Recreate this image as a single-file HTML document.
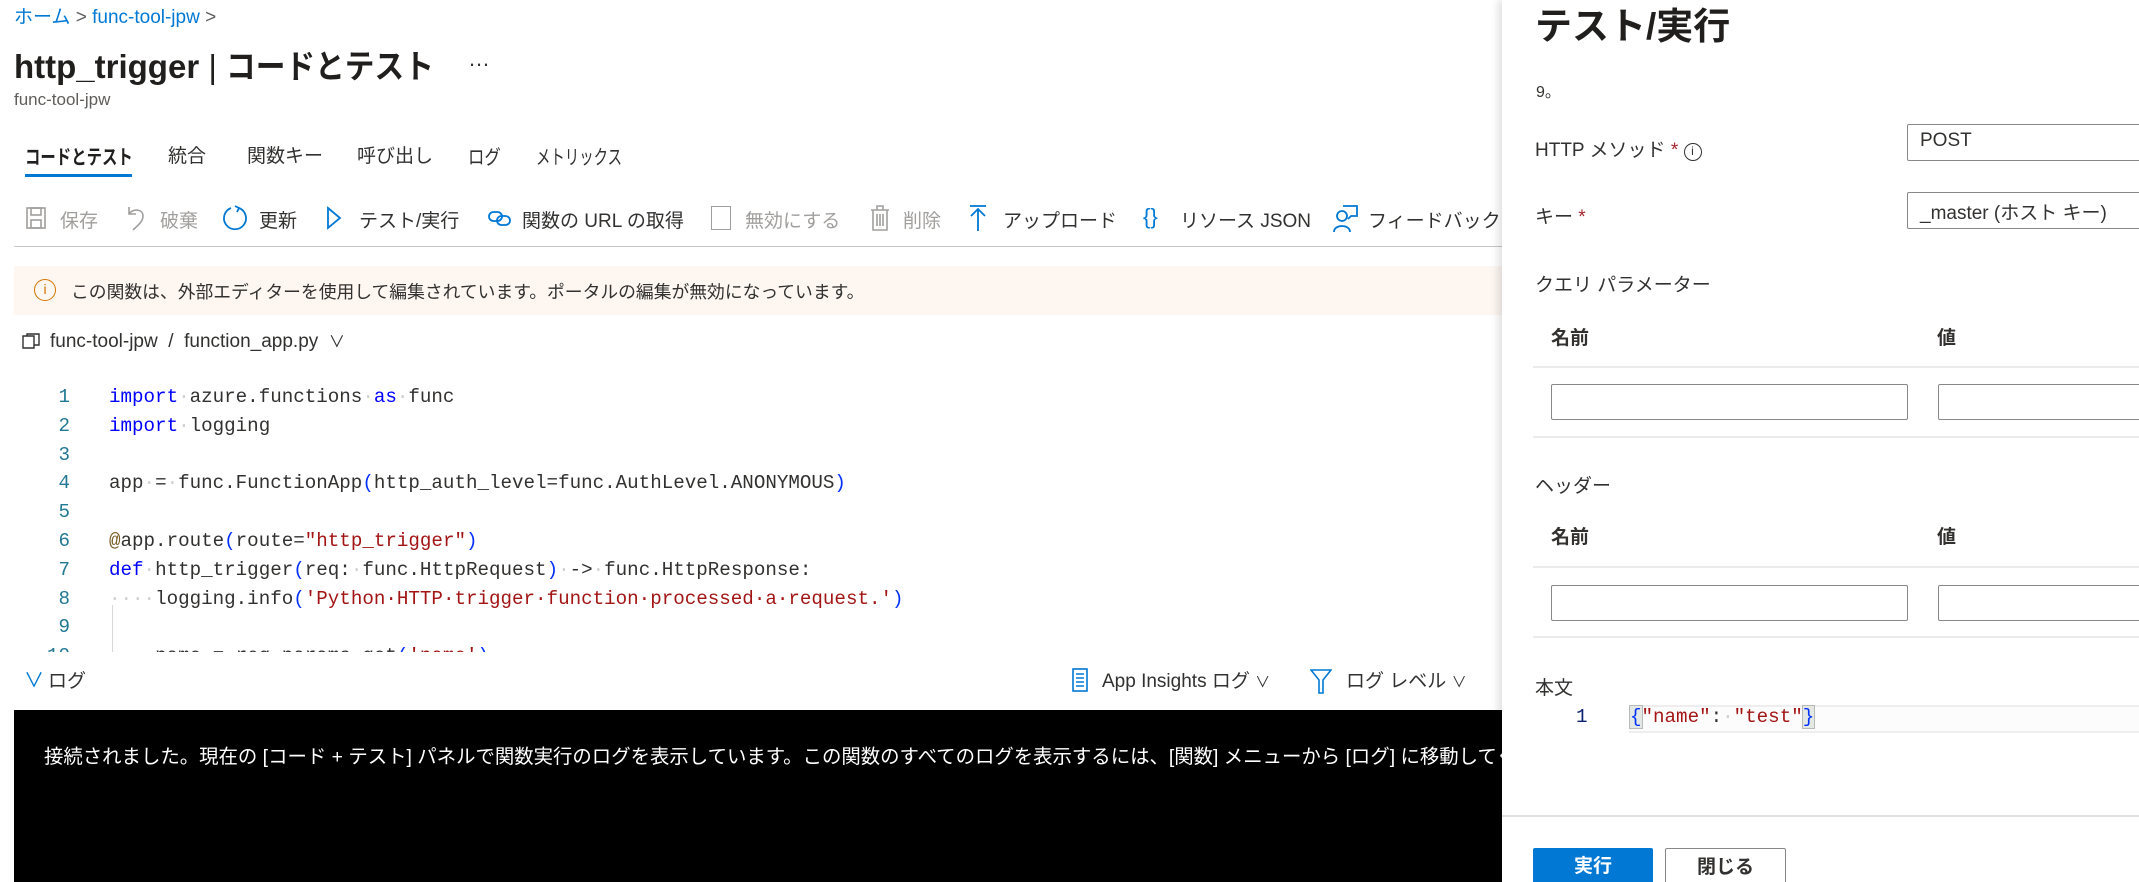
<!DOCTYPE html>
<html><head><meta charset="utf-8"><style>
*{margin:0;padding:0;box-sizing:border-box}
body{width:2139px;height:882px;overflow:hidden;background:#fff;position:relative;font-family:"Liberation Sans","Noto Sans CJK JP",sans-serif;color:#323130}
.a{position:absolute;white-space:nowrap}
.t{font-size:19px}
.sx{display:inline-block;transform-origin:left center}
.mono{font-family:"Liberation Mono","Noto Sans CJK JP",monospace;font-size:19.2px}
.kw{color:#0000ff}.st{color:#a31515}.ws{color:#d0d0d0}.pb{color:#0431fa}
.ln{color:#237893;width:40px;text-align:right}
.inp{position:absolute;border:1px solid #8a8886;border-radius:2px;background:#fff}
.hl{position:absolute;height:2px;background:#edebe9}
</style></head><body>
<div class="a t" style="left:14px;top:2px;color:#0078d4">ホーム <span style="color:#605e5c">&gt;</span> func-tool-jpw <span style="color:#605e5c">&gt;</span></div>
<div class="a" style="left:14px;top:40px;font-size:33px;font-weight:600;color:#201f1e">http_trigger <span style="font-weight:400">|</span> <span class="sx" style="transform:scaleX(0.9)">コードとテスト</span></div>
<div class="a" style="left:468px;top:46px;font-size:22px">…</div>
<div class="a" style="left:14px;top:90px;font-size:17px;color:#605e5c">func-tool-jpw</div>
<div class="a t" style="left:25px;top:141px;font-weight:600;color:#201f1e;font-size:20px"><span class="sx" style="transform:scaleX(0.77)">コードとテスト</span></div>
<div class="a" style="left:25px;top:174px;width:107px;height:3px;background:#0078d4"></div>
<div class="a t" style="left:168px;top:141px">統合</div>
<div class="a t" style="left:247px;top:141px">関数キー</div>
<div class="a t" style="left:357px;top:141px">呼び出し</div>
<div class="a t" style="left:468px;top:141px;font-size:20px"><span class="sx" style="transform:scaleX(0.82)">ログ</span></div>
<div class="a t" style="left:536px;top:141px;font-size:20px"><span class="sx" style="transform:scaleX(0.72)">メトリックス</span></div>
<svg class="a" style="left:25px;top:206px" width="22" height="24" viewBox="0 0 22 24" fill="none" stroke="#a19f9d" stroke-width="1.6"><rect x="2" y="2" width="18" height="20"/><rect x="6" y="2" width="10" height="7"/><rect x="6" y="14" width="10" height="8"/></svg>
<div class="a t" style="left:60px;top:206px;color:#a19f9d">保存</div>
<svg class="a" style="left:125px;top:204px" width="22" height="28" viewBox="0 0 22 28" fill="none" stroke="#a19f9d" stroke-width="1.6"><path d="M4 3 L4 10 L11 10"/><path d="M4 10 C8 4 18 5 18 12 C18 18 12 22 8 26"/></svg>
<div class="a t" style="left:160px;top:206px;color:#a19f9d">破棄</div>
<svg class="a" style="left:222px;top:204px" width="26" height="28" viewBox="0 0 26 28" fill="none" stroke="#0078d4" stroke-width="1.8"><path d="M9 4 A11 11 0 1 0 17 4"/><path d="M13 2 L17 4 L15 8"/></svg>
<div class="a t" style="left:259px;top:206px">更新</div>
<svg class="a" style="left:325px;top:206px" width="18" height="24" viewBox="0 0 18 24" fill="none" stroke="#0078d4" stroke-width="1.8"><path d="M3 2 L15 12 L3 22 Z"/></svg>
<div class="a t" style="left:359px;top:206px">テスト/実行</div>
<svg class="a" style="left:487px;top:208px" width="26" height="20" viewBox="0 0 26 20" fill="none" stroke="#0078d4" stroke-width="1.8"><rect x="2" y="4" width="13" height="9" rx="4.5"/><rect x="10" y="8" width="13" height="9" rx="4.5"/></svg>
<div class="a t" style="left:522px;top:206px">関数の URL の取得</div>
<div class="a" style="left:711px;top:206px;width:20px;height:24px;border:1.6px solid #a19f9d"></div>
<div class="a t" style="left:745px;top:206px;color:#a19f9d">無効にする</div>
<svg class="a" style="left:869px;top:204px" width="22" height="28" viewBox="0 0 22 28" fill="none" stroke="#a19f9d" stroke-width="1.6"><path d="M2 6 H20 M8 6 V2 H14 V6 M4 6 V26 H18 V6 M8 10 V22 M11 10 V22 M14 10 V22"/></svg>
<div class="a t" style="left:903px;top:206px;color:#a19f9d">削除</div>
<svg class="a" style="left:968px;top:204px" width="20" height="28" viewBox="0 0 20 28" fill="none" stroke="#0078d4" stroke-width="1.8"><path d="M2 2 H18 M10 5 V27 M3 12 L10 5 L17 12"/></svg>
<div class="a t" style="left:1003px;top:206px">アップロード</div>
<div class="a" style="left:1143px;top:204px;font-size:22px;color:#0078d4">{}</div>
<div class="a t" style="left:1180px;top:206px">リソース JSON</div>
<svg class="a" style="left:1333px;top:204px" width="26" height="30" viewBox="0 0 26 30" fill="none" stroke="#0078d4" stroke-width="1.8"><circle cx="9" cy="12" r="5"/><path d="M1 28 C1 20 17 20 17 28"/><path d="M10 2 H24 V12 H18 L15 15"/></svg>
<div class="a t" style="left:1368px;top:206px">フィードバック</div>
<div class="a" style="left:14px;top:246px;width:1488px;height:1px;background:#c8c6c4"></div>
<div class="a" style="left:14px;top:266px;width:1488px;height:49px;background:#fdf6f1"></div>
<div class="a" style="left:34px;top:279px;width:22px;height:22px;border:1.6px solid #d47500;border-radius:50%;color:#d47500;font-size:14px;text-align:center;line-height:19px">i</div>
<div class="a" style="left:71px;top:278px;font-size:17.8px;color:#323130">この関数は、外部エディターを使用して編集されています。ポータルの編集が無効になっています。</div>
<svg class="a" style="left:22px;top:333px" width="18" height="16" viewBox="0 0 18 16" fill="none" stroke="#323130" stroke-width="1.4"><path d="M1 3 H12 V15 H1 Z M5 3 V1 H17 V12 H12"/></svg>
<div class="a t" style="left:50px;top:328px">func-tool-jpw &nbsp;/&nbsp; function_app.py &nbsp;<span style="font-size:16px">∨</span></div>
<div class="a" style="left:0;top:380px;width:1500px;height:272px;overflow:hidden">
<div style="position:absolute;left:112px;top:225px;width:1px;height:60px;background:#d8d8d8"></div>
<div class="mono" style="position:absolute;left:30px;top:3px;line-height:28.8px">
<div style="display:flex"><span class="ln">1</span><span style="margin-left:39px"><span class="kw">import</span><span class="ws">·</span>azure.functions<span class="ws">·</span><span class="kw">as</span><span class="ws">·</span>func</span></div>
<div style="display:flex"><span class="ln">2</span><span style="margin-left:39px"><span class="kw">import</span><span class="ws">·</span>logging</span></div>
<div style="display:flex"><span class="ln">3</span></div>
<div style="display:flex"><span class="ln">4</span><span style="margin-left:39px">app<span class="ws">·</span>=<span class="ws">·</span>func.FunctionApp<span class="pb">(</span>http_auth_level=func.AuthLevel.ANONYMOUS<span class="pb">)</span></span></div>
<div style="display:flex"><span class="ln">5</span></div>
<div style="display:flex"><span class="ln">6</span><span style="margin-left:39px"><span style="color:#795e26">@</span>app.route<span class="pb">(</span>route=<span class="st">"http_trigger"</span><span class="pb">)</span></span></div>
<div style="display:flex"><span class="ln">7</span><span style="margin-left:39px"><span class="kw">def</span><span class="ws">·</span>http_trigger<span class="pb">(</span>req:<span class="ws">·</span>func.HttpRequest<span class="pb">)</span><span class="ws">·</span>-&gt;<span class="ws">·</span>func.HttpResponse:</span></div>
<div style="display:flex"><span class="ln">8</span><span style="margin-left:39px"><span class="ws">····</span>logging.info<span class="pb">(</span><span class="st">'Python·HTTP·trigger·function·processed·a·request.'</span><span class="pb">)</span></span></div>
<div style="display:flex"><span class="ln">9</span></div>
<div style="display:flex"><span class="ln">10</span><span style="margin-left:39px"><span class="ws">····</span>name<span class="ws">·</span>=<span class="ws">·</span>req.params.get<span class="pb">(</span><span class="st">'name'</span><span class="pb">)</span></span></div>
</div></div>
<div class="a" style="left:24px;top:664px;font-size:20px;color:#0078d4">∨</div>
<div class="a t" style="left:48px;top:666px">ログ</div>
<svg class="a" style="left:1071px;top:668px" width="18" height="24" viewBox="0 0 18 24" fill="none" stroke="#0078d4" stroke-width="1.6"><rect x="2" y="1" width="14" height="22"/><path d="M5 6 H13 M5 10 H13 M5 14 H13 M5 18 H13"/></svg>
<div class="a t" style="left:1102px;top:666px">App Insights ログ <span style="font-size:15px">∨</span></div>
<svg class="a" style="left:1310px;top:668px" width="22" height="26" viewBox="0 0 22 26" fill="none" stroke="#0078d4" stroke-width="1.6"><path d="M1 2 H21 L13 12 V25 H9 V12 Z"/></svg>
<div class="a t" style="left:1346px;top:666px">ログ レベル <span style="font-size:15px">∨</span></div>
<div class="a" style="left:14px;top:710px;width:1488px;height:172px;background:#000"></div>
<div class="a" style="left:44px;top:740px;color:#fff;font-size:19.4px">接続されました。現在の [コード + テスト] パネルで関数実行のログを表示しています。この関数のすべてのログを表示するには、[関数] メニューから [ログ] に移動してください。</div>
<div class="a" style="left:1502px;top:0;width:637px;height:882px;background:#fff;box-shadow:-4px 0 8px rgba(0,0,0,0.12);overflow:hidden">
<div class="a" style="left:33px;top:-4px;font-size:37px;font-weight:700;color:#201f1e">テスト/実行</div>
<div class="a" style="left:34px;top:78px;font-size:16px">9。</div>
<div class="a t" style="left:33px;top:135px">HTTP メソッド <span style="color:#a4262c">*</span> <span style="display:inline-block;width:18px;height:18px;border:1.4px solid #323130;border-radius:50%;font-size:12px;text-align:center;line-height:15px;vertical-align:1px">i</span></div>
<div class="inp" style="left:405px;top:124px;width:300px;height:37px"></div>
<div class="a t" style="left:418px;top:130px">POST</div>
<div class="a t" style="left:33px;top:202px">キー <span style="color:#a4262c">*</span></div>
<div class="inp" style="left:405px;top:192px;width:300px;height:37px"></div>
<div class="a t" style="left:418px;top:198px">_master (ホスト キー)</div>
<div class="a t" style="left:33px;top:270px">クエリ パラメーター</div>
<div class="a t" style="left:49px;top:323px;font-weight:700">名前</div>
<div class="a t" style="left:435px;top:323px;font-weight:700">値</div>
<div class="hl" style="left:31px;top:366px;width:620px"></div>
<div class="inp" style="left:49px;top:384px;width:357px;height:36px"></div>
<div class="inp" style="left:436px;top:384px;width:300px;height:36px"></div>
<div class="hl" style="left:31px;top:436px;width:620px"></div>
<div class="a t" style="left:33px;top:471px">ヘッダー</div>
<div class="a t" style="left:49px;top:522px;font-weight:700">名前</div>
<div class="a t" style="left:435px;top:522px;font-weight:700">値</div>
<div class="hl" style="left:31px;top:566px;width:620px"></div>
<div class="inp" style="left:49px;top:585px;width:357px;height:36px"></div>
<div class="inp" style="left:436px;top:585px;width:300px;height:36px"></div>
<div class="hl" style="left:31px;top:636px;width:620px"></div>
<div class="a t" style="left:33px;top:673px">本文</div>
<div class="a" style="left:127px;top:705px;width:520px;height:28px;background:#fcfcfc;border-top:2px solid #eee;border-bottom:2px solid #eee"></div>
<div class="a mono" style="left:74px;top:706px;color:#0b216f">1</div>
<div class="a mono" style="left:128px;top:706px"><span style="color:#0431fa;background:#e4e8e4;outline:1px solid #b9b9b9">{</span><span class="st">"name"</span>:<span class="ws">·</span><span class="st">"test"</span><span style="color:#0431fa;background:#e4e8e4;outline:1px solid #b9b9b9">}</span></div>
<div class="hl" style="left:0;top:815px;width:640px;background:#e1dfdd"></div>
<div class="a" style="left:31px;top:848px;width:120px;height:40px;background:#0078d4;border-radius:2px;color:#fff;font-size:19px;font-weight:700;text-align:center;line-height:38px">実行</div>
<div class="a" style="left:163px;top:848px;width:121px;height:40px;border:1px solid #8a8886;border-radius:2px;font-size:19px;font-weight:700;text-align:center;line-height:38px">閉じる</div>
</div>
</body></html>
